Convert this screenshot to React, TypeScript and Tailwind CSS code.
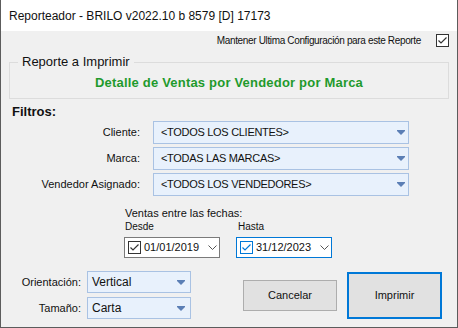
import React from "react";

const Arrow = () => (
  <svg width="8" height="5" viewBox="0 0 8 5" className="shrink-0">
    <path d="M0 0H8V1L4 5L0 1Z" fill="#5b7fb5" />
  </svg>
);

const Check = ({ color = "#333" }: { color?: string }) => (
  <svg width="11" height="11" viewBox="0 0 11 11">
    <path d="M1.5 5.5L4 8L9.5 2.5" stroke={color} strokeWidth="1.2" fill="none" />
  </svg>
);

const Combo = ({ text, w }: { text: string; w: string }) => (
  <div className={`${w} h-[23px] border border-[#a9c2e3] bg-[#e8f1fc] flex items-center pl-[7px] pr-[3px] justify-between`}>
    <span className="text-[11px] tracking-[-0.3px] text-[#111]">{text}</span>
    <Arrow />
  </div>
);

const SmallCombo = ({ text }: { text: string }) => (
  <div className="w-[104px] h-[22px] border border-[#a9c2e3] bg-[#e8f1fc] flex items-center pl-[4px] pr-[5px] justify-between">
    <span className="text-[12px] text-[#111]">{text}</span>
    <Arrow />
  </div>
);

const DateBox = ({ text, active }: { text: string; active?: boolean }) => (
  <div
    className={`w-[96px] h-[21px] border bg-white flex items-center pl-[3px] ${
      active ? "border-[#0078d7]" : "border-[#7a7a7a]"
    }`}
  >
    <div
      className={`w-[13px] h-[13px] border flex items-center justify-center ${
        active ? "border-[#0078d7]" : "border-[#333]"
      }`}
    >
      <Check color={active ? "#0078d7" : "#333"} />
    </div>
    <span className="ml-[3px] text-[11px] text-[#111]">{text}</span>
    <svg width="9" height="5" viewBox="0 0 9 5" className="ml-[9px]">
      <path d="M0.5 0.5L4.5 4.5L8.5 0.5" stroke="#555" fill="none" />
    </svg>
  </div>
);

export default function App() {
  return (
    <div
      className="w-[458px] h-[328px] flex flex-col border-x border-b border-[#5c5c5c] bg-[#f0f0f0] overflow-hidden"
      style={{ fontFamily: '"Liberation Sans", Arial, sans-serif' }}
    >
      <div className="h-[31px] bg-white flex items-center pl-[8px] text-[12px] text-[#111] shrink-0">
        Reporteador - BRILO v2022.10 b 8579 [D] 17173
      </div>
      <div className="flex-1 flex flex-col">
        <div className="mt-[3px] h-[13px] flex items-center justify-end pr-[8px]">
          <span className="text-[10px] tracking-[-0.35px] text-[#111] mr-[15px]">
            Mantener Ultima Configuración para este Reporte
          </span>
          <div className="w-[13px] h-[13px] border border-[#333] bg-white flex items-center justify-center">
            <Check />
          </div>
        </div>
        <fieldset className="mt-[7px] ml-[8px] w-[440px] border border-[#dcdcdc] pb-[6px]">
          <legend className="ml-[8px] px-[4px] text-[13px] leading-[16px] text-[#111]">
            Reporte a Imprimir
          </legend>
          <div className="mt-[4px] text-center text-[13px] tracking-[0.2px] leading-[18px] font-bold text-[#1f9a2c]">
            Detalle de Ventas por Vendedor por Marca
          </div>
        </fieldset>
        <div className="mt-[5px] ml-[11px] text-[13px] leading-[16px] font-bold text-[#111]">Filtros:</div>
        <div className="mt-[1px] grid grid-cols-[139px_256px] gap-x-[13px] gap-y-[3px] items-center">
          <span className="text-right text-[11px] text-[#111]">Cliente:</span>
          <Combo w="w-[256px]" text="<TODOS LOS CLIENTES>" />
          <span className="text-right text-[11px] text-[#111]">Marca:</span>
          <Combo w="w-[256px]" text="<TODAS LAS MARCAS>" />
          <span className="text-right text-[11px] text-[#111]">Vendedor Asignado:</span>
          <Combo w="w-[256px]" text="<TODOS LOS VENDEDORES>" />
        </div>
        <div className="ml-[123px] mt-[10px] flex flex-col">
          <span className="ml-[1px] text-[11px] leading-[14px] text-[#111]">Ventas entre las fechas:</span>
          <div className="flex gap-[16px] mt-[0px]">
            <div className="flex flex-col">
              <span className="ml-[1px] text-[10px] leading-[14px] text-[#111]">Desde</span>
              <div className="mt-[3px]">
                <DateBox text="01/01/2019" />
              </div>
            </div>
            <div className="flex flex-col">
              <span className="ml-[2px] text-[10px] leading-[14px] text-[#111]">Hasta</span>
              <div className="mt-[3px]">
                <DateBox text="31/12/2023" active />
              </div>
            </div>
          </div>
        </div>
        <div className="mt-[13px] flex items-start">
          <div className="grid grid-cols-[80px_104px] gap-x-[6px] gap-y-[4px] items-center">
            <span className="text-right text-[11px] text-[#111]">Orientación:</span>
            <SmallCombo text="Vertical" />
            <span className="text-right text-[11px] text-[#111]">Tamaño:</span>
            <SmallCombo text="Carta" />
          </div>
          <button className="ml-[52px] mt-[9px] w-[94px] h-[31px] bg-[#e1e1e1] border border-[#adadad] text-[11px] text-[#111]">
            Cancelar
          </button>
          <button className="ml-[10px] mt-[1px] w-[95px] h-[47px] bg-[#e1e1e1] border-2 border-[#0078d7] text-[11px] text-[#111]">
            Imprimir
          </button>
        </div>
      </div>
    </div>
  );
}
